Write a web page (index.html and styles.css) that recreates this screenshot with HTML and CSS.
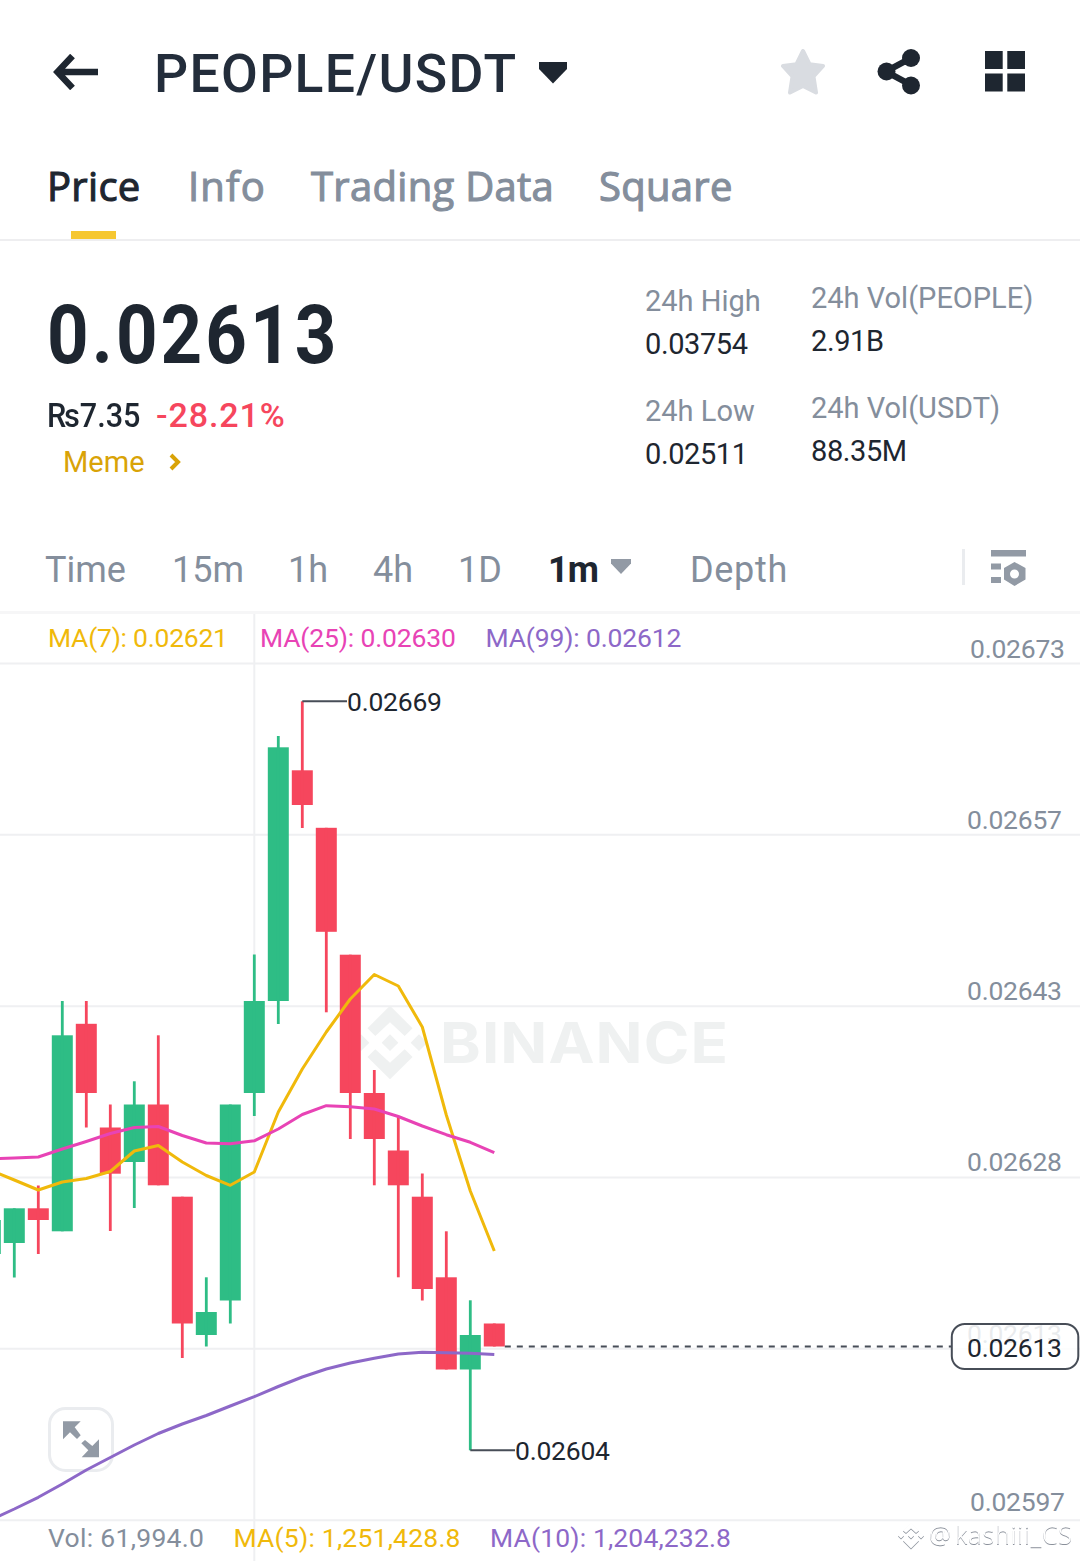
FILE: index.html
```html
<html>
<head>
<meta charset="utf-8">
<title>PEOPLE/USDT</title>
<link rel="stylesheet" href="styles.css">
</head>
<body>
<div id="header">
    <svg class="back" width="46" height="36" viewBox="0 0 46 36"><path d="M45 18H5M19.500 2L4.500 18L19.500 34" fill="none" stroke="#1e2630" stroke-width="6.500"/></svg>
    <h1>PEOPLE/USDT</h1>
    <svg class="caret" width="28" height="22" viewBox="0 0 28 22"><path d="M0 0H28V7L14 21.500L0 7Z" fill="#1e2630"/></svg>
    <div class="actions">
        <svg width="44" height="46" viewBox="0 0 44 46"><path d="M22 2L28.500 15.200L42 17L32.500 27.500L35 43.500L22 37L9 43.500L11.500 27.500L2 17L15.500 15.200Z" fill="#d9dce1" stroke="#d9dce1" stroke-width="4" stroke-linejoin="round"/></svg>
        <svg class="share" width="44" height="46" viewBox="0 0 44 46"><path d="M34 9L9 22.500L34 36" fill="none" stroke="#1e2630" stroke-width="6.500"/><circle cx="34" cy="9" r="9" fill="#1e2630"/><circle cx="9.500" cy="22.500" r="9" fill="#1e2630"/><circle cx="34" cy="36.500" r="9" fill="#1e2630"/></svg>
        <svg width="40" height="41" viewBox="0 0 40 41"><path d="M0 0h17.700v18H0zM22.300 0H40v18H22.300zM0 22.500h17.700v18H0zM22.300 22.500H40v18H22.300z" fill="#1e2630"/></svg>
    </div>
</div>

<div id="tabs">
    <a class="active">Price</a>
    <a class="info">Info</a>
    <a>Trading Data</a>
    <a>Square</a>
</div>

<div id="summary">
    <div class="last">
        <div class="price">0.02613</div>
        <div class="fiat"><span class="rs">₨7.35</span><span class="change">-28.21%</span></div>
        <div class="tag">Meme<svg width="12" height="18" viewBox="0 0 12 18"><path d="M2 2L9 9L2 16" fill="none" stroke="#d9a307" stroke-width="4"/></svg></div>
    </div>
    <div class="stats">
        <p>24h High</p>
        <p class="val">0.03754</p>
        <p class="second">24h Low</p>
        <p class="val">0.02511</p>
    </div>
    <div class="stats vol">
        <p>24h Vol(PEOPLE)</p>
        <p class="val">2.91B</p>
        <p class="second">24h Vol(USDT)</p>
        <p class="val">88.35M</p>
    </div>
</div>

<div id="intervals">
    <span>Time</span>
    <span>15m</span>
    <span>1h</span>
    <span>4h</span>
    <span>1D</span>
    <span class="active">1m</span>
    <svg class="caret" width="20" height="15" viewBox="0 0 20 15"><path d="M0 0H20V4.500L10 15L0 4.500Z" fill="#929aa5"/></svg>
    <span class="depth">Depth</span>
    <i class="divider"></i>
    <svg class="settings" width="36" height="36" viewBox="0 0 36 36"><path fill="#929aa5" fill-rule="evenodd" d="M0 0H35V6.500H0ZM0 13.500H10V19.500H0ZM0 27H10V33H0ZM23.500 12L34.500 18V29.500L23.500 36L13 29.500V18ZM23.500 19.500A4.500 4.500 0 1 0 23.500 28.500A4.500 4.500 0 1 0 23.500 19.500Z"/></svg>
</div>

<div id="chart">
<svg id="plot" width="1080" height="947" viewBox="0 614 1080 947">
    <g class="grid">
        <path d="M0 663.500H1080M0 834.800H1080M0 1006.200H1080M0 1177.500H1080M0 1348.800H1080M0 1520.200H1080"/>
        <path d="M254.300 614V1561"/>
    </g>

    <g class="brand">
        <path d="M390 1005.700L412.500 1028.300L404.700 1036L390 1022.300L375.300 1036L367.500 1028.300ZM390 1079.300L412.500 1057L404.700 1049.300L390 1062.700L375.300 1049.300L367.500 1057ZM390 1034.300L398.300 1042.700L390 1051L381.700 1042.700ZM419 1034.300L427.300 1042.700L419 1051L410.700 1042.700ZM361 1034.300L369.300 1042.700L361 1051L352.700 1042.700Z"/>
        <text x="440" y="1063" textLength="289" lengthAdjust="spacingAndGlyphs">BINANCE</text>
    </g>

    <rect class="expand" x="49.500" y="1408.500" width="63" height="62" rx="16"/>
    <path fill="#929aa5" d="M63 1421.300H80.700L74.700 1427.300L80.700 1435.300L77 1439L70 1432.300L63 1439.300ZM99 1457.300H81.700L88.300 1450.300L81.300 1443.300L85 1440L92.300 1446L99 1439.300Z"/>

    <g id="candles"></g>
    <g id="averages"></g>

    <g class="mark">
        <path d="M302.300 701.300H347M470.300 1450.300H515"/>
        <text x="347" y="711" textLength="95">0.02669</text>
        <text x="515" y="1460" textLength="95">0.02604</text>
    </g>

    <g class="axis">
        <text x="970" y="658" textLength="95">0.02673</text>
        <text x="967" y="829" textLength="95">0.02657</text>
        <text x="967" y="1000" textLength="95">0.02643</text>
        <text x="967" y="1171" textLength="95">0.02628</text>
        <text x="967" y="1343" textLength="95">0.02613</text>
        <text x="970" y="1511" textLength="95">0.02597</text>
    </g>

    <g class="current">
        <path d="M504.800 1346.500H951"/>
        <rect x="951.800" y="1324" width="126.500" height="45" rx="13"/>
        <text x="967" y="1357" textLength="95">0.02613</text>
    </g>

    <g class="legend">
        <text class="ma1" x="48" y="647" textLength="180">MA(7): 0.02621</text>
        <text class="ma2" x="260" y="647" textLength="196">MA(25): 0.02630</text>
        <text class="ma3" x="485.500" y="647" textLength="196">MA(99): 0.02612</text>
        <text class="vol" x="48" y="1547" textLength="156">Vol: 61,994.0</text>
        <text class="ma1" x="233.500" y="1547" textLength="227">MA(5): 1,251,428.8</text>
        <text class="ma3" x="490" y="1547" textLength="241">MA(10): 1,204,232.8</text>
    </g>

    <g class="author">
        <path d="M911 1522.500L919 1530.500L916 1533L911 1528.500L906 1533L903 1530.500ZM911 1548.500L919 1540.500L916 1538L911 1542.500L906 1538L903 1540.500ZM911 1532.500L914 1535.500L911 1538.500L908 1535.500ZM921 1532.500L924 1535.500L921 1538.500L918 1535.500ZM901 1532.500L904 1535.500L901 1538.500L898 1535.500Z"/>
        <text x="929" y="1544" textLength="22" lengthAdjust="spacingAndGlyphs">@</text>
        <text x="955" y="1544" textLength="117">kashiii_CS</text>
    </g>
</svg>
</div>

<script>
// body top, body bottom, wick top, wick bottom, up?
var candles = [
    [1220, 1254, 1220, 1254, 1],
    [1208.3, 1243, 1208.3, 1277.5, 1],
    [1208.3, 1220, 1185.5, 1254, 0],
    [1035.3, 1231.3, 1001, 1231.3, 1],
    [1023.8, 1093, 1001, 1127.5, 0],
    [1127.5, 1173.7, 1104.5, 1231, 0],
    [1104.5, 1162, 1081.3, 1208, 1],
    [1104.5, 1185.3, 1035.3, 1185.3, 0],
    [1196.7, 1323.5, 1196.7, 1358, 0],
    [1312, 1335, 1277.3, 1346.5, 1],
    [1104.5, 1300.5, 1104.5, 1323.5, 1],
    [1001, 1093, 954.5, 1116, 1],
    [747.3, 1001, 736, 1024, 1],
    [770.3, 805, 701.3, 828, 0],
    [827.8, 931.8, 827.8, 1012.3, 0],
    [954.7, 1093, 954.7, 1139, 0],
    [1093, 1139, 1070, 1185.3, 0],
    [1150.5, 1185.3, 1117, 1277.3, 0],
    [1196.7, 1289, 1173.5, 1300.5, 0],
    [1277.3, 1369.5, 1231.3, 1369.5, 0],
    [1335, 1369.5, 1300.3, 1450.3, 1],
    [1323.5, 1346.5, 1323.5, 1346.5, 0]
];
var averages = {
    ma1: [1170, 1180, 1190, 1182, 1178.5, 1171.5, 1151, 1145.5, 1162, 1175.5, 1185.3, 1172, 1112, 1069, 1032, 999, 974.5, 986, 1027, 1115, 1191, 1251],
    ma2: [1159, 1158, 1157, 1149, 1141.5, 1133.5, 1127.5, 1126.5, 1135.5, 1143, 1143.7, 1140.8, 1129, 1114.5, 1105.7, 1106.7, 1109, 1116.5, 1126, 1134.7, 1142.3, 1152.7],
    ma3: [1520, 1509, 1497.3, 1484, 1470, 1457.5, 1445, 1433.5, 1424, 1415.5, 1406, 1396.7, 1386.5, 1377, 1369, 1363, 1358.3, 1354, 1352.3, 1352.7, 1353.3, 1354.5]
};

function centre(i)
{
    return -9.7 + i * 24;
}

var out = '';
for (i = 0; i < candles.length; i++) {
    var c = candles[i], x = centre(i);
    out += '<g class="' + (c[4] ? 'up' : 'down') + '">';
    out += '<rect x="' + (x - 10.5) + '" y="' + c[0] + '" width="21" height="' + (c[1] - c[0]) + '"/>';
    out += '<rect x="' + (x - 1.4) + '" y="' + c[2] + '" width="2.8" height="' + (c[3] - c[2]) + '"/></g>';
}
document.getElementById('candles').innerHTML = out;

out = '';
for (name in averages) {
    out += '<polyline class="' + name + '" points="';
    for (i = 0; i < averages[name].length; i++)
        out += centre(i) + ',' + averages[name][i] + ' ';
    out += '"/>';
}
document.getElementById('averages').innerHTML = out;
</script>
</body>
</html>
```
FILE: styles.css
```css
body {
    margin: 0;
    background: #fff;
    font-family: Roboto, sans-serif;
    color: #1e2630;
    overflow: hidden;
}
h1, p {
    margin: 0;
}
svg {
    display: block;
}

#header {
    display: flex;
    align-items: center;
    height: 147px;
    padding: 0 55px 0 53px;
}
h1 {
    font-size: 53.5px;
    font-weight: 500;
    letter-spacing: 1.3px;
    margin-left: 55px;
    color: #232d3b;
}
.back {
    margin-bottom: 4px;
}
#header .caret {
    margin-left: 22px;
    margin-bottom: 2px;
}
.actions {
    display: flex;
    align-items: center;
    margin-left: auto;
    margin-bottom: 4px;
}
.share {
    margin: 0 64px 0 52px;
}

#tabs {
    display: grid;
    grid-template-columns: 141px 123px 288px auto;
    padding-left: 47px;
    height: 92px;
    border-bottom: 2px solid #eeeef0;
    font: 40px/77px "Open Sans", sans-serif;
    letter-spacing: 0.3px;
    color: #848e9c;
    -webkit-text-stroke: 1.1px;
}
#tabs .info {
    letter-spacing: 1.2px;
}
#tabs .active {
    color: #1e2630;
    width: 93px;
}
#tabs .active::after {
    content: "";
    display: block;
    width: 45px;
    height: 8px;
    margin: 7px auto 0;
    background: #f6c731;
}

#summary {
    display: grid;
    grid-template-columns: 598px 166px auto;
    padding-left: 47px;
    height: 286px;
}
/* narrow, widely spaced figures */
.price {
    font-size: 82px;
    font-weight: 700;
    line-height: 100px;
    letter-spacing: 3.5px;
    padding-top: 44px;
    transform: scaleX(0.885);
    transform-origin: left;
}
.fiat {
    font-size: 34px;
    font-weight: 500;
    line-height: 60px;
}
.rs {
    display: inline-block;
    width: 125px;
    margin-right: -16px;
    transform: scaleX(0.9);
    transform-origin: left;
}
.change {
    color: #f6465d;
    letter-spacing: 0.9px;
}
.tag {
    display: flex;
    align-items: center;
    gap: 24px;
    padding-left: 16px;
    font-size: 29px;
    line-height: 34px;
    color: #d9a307;
}
.stats {
    font-size: 29px;
    line-height: 43px;
    color: #848e9c;
    padding-top: 39px;
}
.vol {
    padding-top: 36px;
}
.val {
    color: #1e2630;
    letter-spacing: -0.4px;
}
.second {
    margin-top: 24px;
}

#intervals {
    display: grid;
    grid-template-columns: 127px 116px 85px 85px 90px 63px 79px 272px 28px auto;
    align-items: center;
    padding-left: 45px;
    height: 84px;
    border-bottom: 3px solid #f6f6f7;
    font-size: 36px;
    color: #848e9c;
}
#intervals span {
    padding-top: 1px;
}
#intervals .active {
    font-weight: 700;
    letter-spacing: -1px;
    color: #1e2630;
}
#intervals .depth {
    letter-spacing: 0.7px;
}
#intervals .caret {
    margin-bottom: 5px;
}
#intervals .settings {
    margin: 0 0 2px 1px;
}
.divider {
    width: 3px;
    height: 36px;
    margin-bottom: 4px;
    background: #eaecef;
}

#plot {
    font-size: 26.5px;
}
.grid path {
    fill: none;
    stroke: #eff0f2;
    stroke-width: 2;
}
.brand {
    fill: #eff1f1;
    font: 700 56.5px Inter, sans-serif;
    letter-spacing: 1px;
}
.expand {
    fill: #fff;
    stroke: #eaecef;
    stroke-width: 3;
}
.up {
    fill: #2ebd85;
}
.down {
    fill: #f6465d;
}
#averages polyline {
    fill: none;
    stroke-width: 3;
    stroke-linejoin: round;
}
#averages .ma1 {
    stroke: #f0b90b;
}
#averages .ma2 {
    stroke: #e843b5;
}
#averages .ma3 {
    stroke: #8d68c8;
}
.mark path {
    fill: none;
    stroke: #474d57;
    stroke-width: 2;
}
.mark text, .current text {
    fill: #1e2630;
}
.axis, .legend .vol {
    fill: #848e9c;
}
.current path {
    stroke: #474d57;
    stroke-width: 2;
    stroke-dasharray: 6 6;
}
.current rect {
    fill: #fff;
    fill-opacity: 0.82;
    stroke: #474d57;
    stroke-width: 2;
}
.legend .ma1 {
    fill: #f0b90b;
}
.legend .ma2 {
    fill: #e843b5;
}
.legend .ma3 {
    fill: #8d68c8;
}
.author {
    fill: #fff;
    font: 300 25px "Noto Sans", sans-serif;
    filter: drop-shadow(0.5px 1px 0.7px #8a909a);
}
```
